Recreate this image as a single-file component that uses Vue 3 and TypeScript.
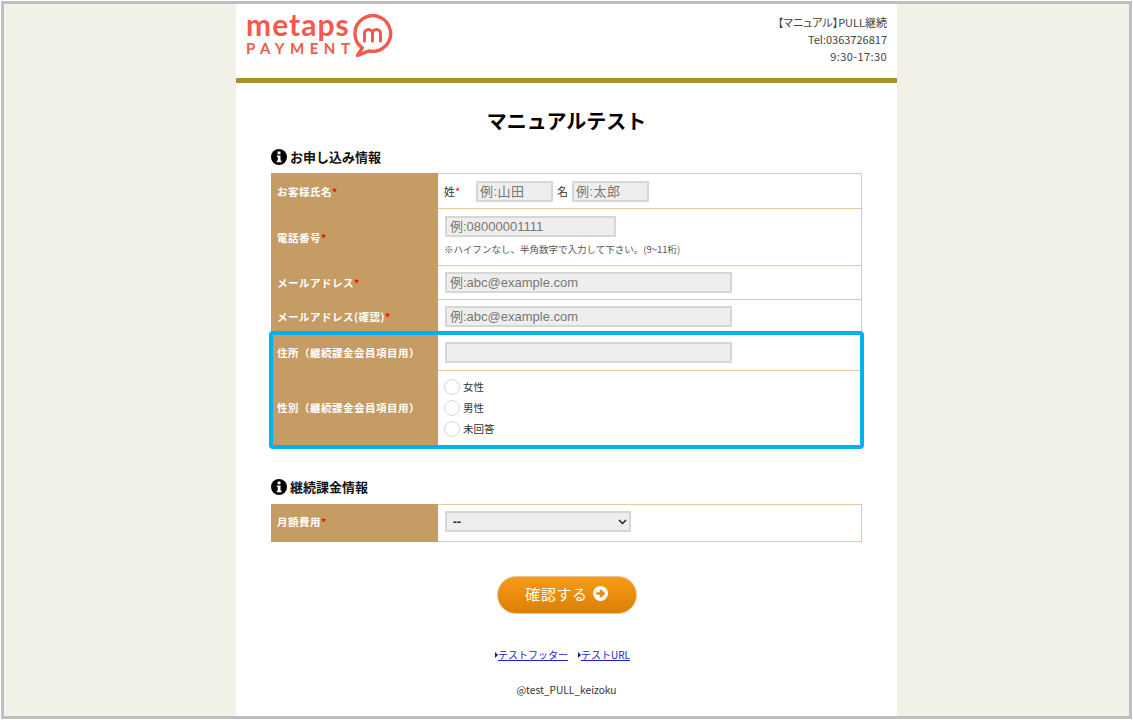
<script setup lang="ts">
const genders: string[] = ['女性', '男性', '未回答']
</script>

<template>
  <div class="frame">
    <main class="sheet">
      <header class="top">
        <div class="logo">
          <div class="logo-words">
            <div class="logo-main">metaps</div>
            <div class="logo-sub">PAYMENT</div>
          </div>
          <svg class="logo-mark" width="42" height="44" viewBox="0 0 42 44">
            <path d="M10.3 33.9A17.8 17.8 0 1 1 17 36.9L5.5 41.5Z" fill="#fff" stroke="#f4594c" stroke-width="3.4" stroke-linejoin="round" />
            <path d="M12.5 27V19.5a4 4 0 0 1 8 0V27M20.5 19.5a4 4 0 0 1 8 0V27" fill="none" stroke="#f4594c" stroke-width="3" stroke-linecap="round" />
          </svg>
        </div>
        <div class="contact">
          <div class="tight">【マニュアル】PULL継続</div>
          <div>Tel:0363726817</div>
          <div class="hours">9:30-17:30</div>
        </div>
      </header>

      <div class="content">
        <h1>マニュアルテスト</h1>

        <h2>
          <svg class="info" width="16" height="16" viewBox="0 0 16 16">
            <circle cx="8" cy="8" r="8" fill="#000" />
            <rect x="6.6" y="2.6" width="2.9" height="2.7" rx="0.5" fill="#fff" />
            <path d="M5.8 6.4h3.7v5.2h1v1.7H5.8v-1.7h1V8.1h-1Z" fill="#fff" />
          </svg>
          お申し込み情報
        </h2>

        <div class="form-wrap">
          <table class="form">
            <tbody>
              <tr class="r1">
                <th>お客様氏名<em>*</em></th>
                <td>
                  <div class="names">
                    <span class="name-label">姓<em>*</em></span>
                    <input class="in in-name" placeholder="例:山田" />
                    <span>名</span>
                    <input class="in in-name" placeholder="例:太郎" />
                  </div>
                </td>
              </tr>
              <tr class="r2">
                <th>電話番号<em>*</em></th>
                <td class="tel-cell">
                  <input class="in in-tel" placeholder="例:08000001111" />
                  <p class="hint">※ハイフンなし、半角数字で入力して下さい。(9~11桁)</p>
                </td>
              </tr>
              <tr class="r3">
                <th>メールアドレス<em>*</em></th>
                <td><input class="in in-wide" placeholder="例:abc@example.com" /></td>
              </tr>
              <tr class="r3">
                <th>メールアドレス(確認)<em>*</em></th>
                <td><input class="in in-wide" placeholder="例:abc@example.com" /></td>
              </tr>
              <tr class="r5">
                <th>住所（継続課金会員項目用）</th>
                <td><input class="in in-wide" /></td>
              </tr>
              <tr class="r6">
                <th>性別（継続課金会員項目用）</th>
                <td>
                  <label v-for="g in genders" :key="g" class="radio">
                    <span class="dot"></span>{{ g }}
                  </label>
                </td>
              </tr>
            </tbody>
          </table>
          <div class="highlight"></div>
        </div>

        <h2 class="second">
          <svg class="info" width="16" height="16" viewBox="0 0 16 16">
            <circle cx="8" cy="8" r="8" fill="#000" />
            <rect x="6.6" y="2.6" width="2.9" height="2.7" rx="0.5" fill="#fff" />
            <path d="M5.8 6.4h3.7v5.2h1v1.7H5.8v-1.7h1V8.1h-1Z" fill="#fff" />
          </svg>
          継続課金情報
        </h2>

        <table class="form">
          <tbody>
            <tr class="r7">
              <th>月額費用<em>*</em></th>
              <td>
                <div class="sel-wrap">
                  <select class="sel"><option>--</option></select>
                  <svg class="chev" width="9" height="6" viewBox="0 0 9 6">
                    <path d="M1 1l3.5 3.5L8 1" fill="none" stroke="#222" stroke-width="1.5" />
                  </svg>
                </div>
              </td>
            </tr>
          </tbody>
        </table>

        <div class="action">
          <button class="confirm" type="button">
            確認する
            <svg width="15" height="15" viewBox="0 0 16 16">
              <circle cx="8" cy="8" r="8" fill="#fff" />
              <path d="M3.6 8h7M7.6 4.4 11.2 8l-3.6 3.6" fill="none" stroke="#e08a12" stroke-width="2.6" />
            </svg>
          </button>
        </div>

        <nav class="links">
          <a href="#"><i class="tri"></i>テストフッター</a>
          <a href="#"><i class="tri"></i>テストURL</a>
        </nav>
        <div class="copy">@test_PULL_keizoku</div>
      </div>
    </main>
  </div>
</template>

<style>
html, body { margin: 0; background: #fff; }
</style>

<style scoped>
.frame {
  box-sizing: border-box;
  width: 1131px;
  height: 718px;
  margin: 1px;
  border: 3px solid #bfbfbf;
  background: #f2f1e8;
  overflow: hidden;
  font-family: "Noto Sans CJK JP", "Liberation Sans", sans-serif;
  color: #222;
}
.sheet {
  width: 661px;
  height: 712px;
  margin: 0 0 0 232px;
  background: #fff;
}
.top {
  box-sizing: border-box;
  height: 79px;
  border-bottom: 5px solid #a8902e;
  display: flex;
  justify-content: space-between;
  padding: 8px 10px 0 10px;
}
.logo { display: flex; align-items: flex-start; }
.logo-words { width: 106px; color: #f4594c; font-family: "Lato", sans-serif; }
.logo-main {
  font-size: 30px;
  line-height: 29px;
  font-weight: 700;
  letter-spacing: 1px;
  height: 29px;
  margin-top: -2px;
}
.logo-sub {
  font-size: 15px;
  font-weight: 700;
  line-height: 12px;
  letter-spacing: 5.5px;
  margin-top: 3px;
}
.logo-mark { margin-top: 2px; margin-left: 0; }
.contact {
  text-align: right;
  font-size: 11px;
  line-height: 17.5px;
  color: #444;
  padding-top: 1px;
}
.tight { font-feature-settings: "palt"; margin-top: 1px; margin-bottom: -1px; }
.hours { letter-spacing: 0.4px; }
.content { padding: 0 35px; }
h1 {
  margin: 0;
  padding-top: 22px;
  height: 42px;
  box-sizing: content-box;
  font-size: 20px;
  line-height: 32px;
  font-weight: 700;
  text-align: center;
  color: #000;
}
h2 {
  display: flex;
  align-items: center;
  gap: 3px;
  margin: 0;
  height: 24px;
  margin-bottom: 5px;
  margin-top: -3px;
  font-size: 13px;
  font-weight: 700;
  color: #111;
}
h2.second { margin-top: 27px; margin-bottom: 6px; }
.info { flex: none; margin-top: 2px; }
.form-wrap { position: relative; }
.form {
  width: 591px;
  border-collapse: collapse;
  table-layout: fixed;
  font-size: 11px;
}
.form th {
  width: 166px;
  box-sizing: border-box;
  background: #c69c65;
  color: #fff;
  font-size: 10.5px;
  letter-spacing: 0.5px;
  font-weight: 700;
  text-align: left;
  padding: 0 0 0 5px;
  border: 1px solid #c69c65;
}
.form td {
  border: 1px solid #e8c9a0;
  padding: 0 6px;
  color: #333;
}
.form em { color: #f00; font-style: normal; }
.form td.tel-cell { padding-bottom: 2px; }
.r1 { height: 35px; }
.r2 { height: 57px; }
.r3 { height: 34px; }
.r5 { height: 37px; }
.r6 { height: 76px; }
.r6 td, .r6 th { padding-bottom: 2px; }
.r7 { height: 37px; }
.form .r7 td, .form .r7 th { padding-bottom: 3px; }
.names { display: flex; align-items: center; gap: 4px; }
.name-label { width: 28px; }
.in {
  box-sizing: border-box;
  display: block;
  height: 21px;
  padding: 0 3px;
  margin: 0 0 0 1px;
  background: #eee;
  border: 2px solid #d6d6d6;
  border-radius: 1px;
  font-family: "Liberation Sans", "Noto Sans CJK JP", sans-serif;
  font-size: 13px;
}
.in::placeholder { color: #777; opacity: 1; }
.in-name { width: 77px; margin-left: 0; padding: 0 2px; letter-spacing: 0.5px; }
.in-tel { width: 171px; }
.in-wide { width: 287px; }
.hint { margin: 5px 0 0; font-size: 9.5px; line-height: 14px; color: #555; }
.radio {
  display: flex;
  align-items: center;
  gap: 3px;
  height: 21px;
  font-size: 10.5px;
  color: #333;
}
.dot {
  box-sizing: border-box;
  width: 16px;
  height: 16px;
  border: 1px solid #d8d8d8;
  border-radius: 50%;
  background: #fff;
}
.sel-wrap { position: relative; width: 186px; margin-left: 1px; }
.sel {
  appearance: none;
  display: block;
  width: 186px;
  height: 21px;
  box-sizing: border-box;
  background: #eee;
  border: 2px solid #d6d6d6;
  border-radius: 1px;
  font-family: "Liberation Sans", sans-serif;
  font-size: 12px;
  font-weight: 700;
  color: #222;
  padding-left: 6px;
}
.chev { position: absolute; right: 4px; top: 8px; pointer-events: none; }
.highlight {
  position: absolute;
  box-sizing: border-box;
  left: -2px;
  right: -2px;
  top: 158px;
  height: 118px;
  border: 4px solid #00b0f0;
  border-radius: 4px;
  pointer-events: none;
}
.action { display: flex; justify-content: center; padding-top: 34px; }
.confirm {
  box-sizing: border-box;
  width: 140px;
  height: 38px;
  border: 1px solid #eac38d;
  border-radius: 19px;
  background: linear-gradient(#f79a18, #dc8004);
  color: #fff;
  font-family: "Noto Sans CJK JP", sans-serif;
  font-size: 15px;
  letter-spacing: 0.6px;
  display: flex;
  align-items: center;
  justify-content: center;
  gap: 5px;
  padding: 0 0 3px;
}
.links {
  display: flex;
  justify-content: center;
  gap: 10px;
  margin: 33px 8px 0 0;
  font-size: 10px;
  line-height: 16px;
}
.links a { color: #2222cc; text-decoration: underline; display: inline-flex; align-items: center; }
.tri {
  display: inline-block;
  width: 0;
  height: 0;
  border-left: 3px solid #1a1a8c;
  border-top: 3px solid transparent;
  border-bottom: 3px solid transparent;
}
.copy {
  text-align: center;
  margin-top: 19px;
  font-size: 10.2px;
  line-height: 16px;
  color: #333;
}
</style>
